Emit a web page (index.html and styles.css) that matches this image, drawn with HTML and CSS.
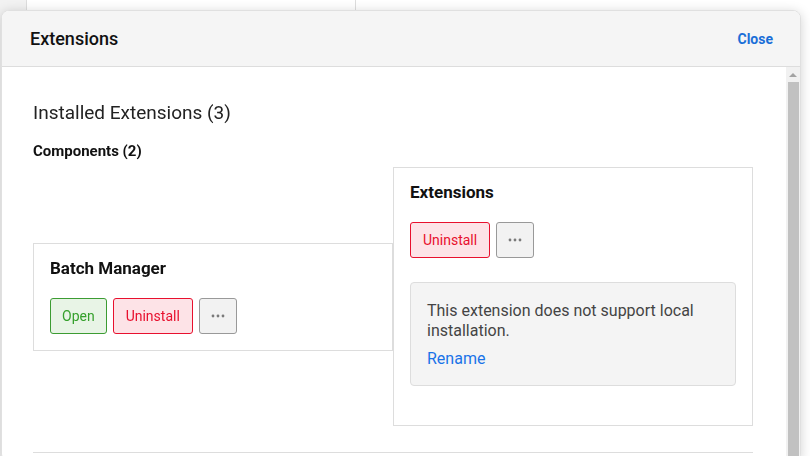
FILE: index.html
```html
<!DOCTYPE html>
<html lang="en">
<head>
<meta charset="utf-8">
<title>Extensions</title>
<link rel="stylesheet" href="styles.css">
</head>
<body>
<div class="page">
  <div class="sidebar"></div>
  <div class="panel"></div>
  <div class="main"></div>
</div>

<div class="modal">
  <div class="modal-header">
    <h1 class="modal-title">Extensions</h1>
    <a class="close-link" href="#">Close</a>
  </div>
  <div class="modal-body">
    <div class="content">
      <h2 class="section-title">Installed Extensions (3)</h2>
      <h3 class="group-title">Components (2)</h3>
      <div class="card-row">
        <div class="card">
          <div class="card-title">Batch Manager</div>
          <div class="actions">
            <button class="btn btn-open">Open</button>
            <button class="btn btn-uninstall">Uninstall</button>
            <button class="btn btn-more" aria-label="More"><svg width="14" height="4" viewBox="0 0 14 4"><circle cx="2" cy="2" r="1.4"/><circle cx="7" cy="2" r="1.4"/><circle cx="12" cy="2" r="1.4"/></svg></button>
          </div>
        </div>
        <div class="card">
          <div class="card-title">Extensions</div>
          <div class="actions">
            <button class="btn btn-uninstall">Uninstall</button>
            <button class="btn btn-more" aria-label="More"><svg width="14" height="4" viewBox="0 0 14 4"><circle cx="2" cy="2" r="1.4"/><circle cx="7" cy="2" r="1.4"/><circle cx="12" cy="2" r="1.4"/></svg></button>
          </div>
          <div class="notice">
            <p class="notice-text">This extension does not support local installation.</p>
            <a class="notice-link" href="#">Rename</a>
          </div>
        </div>
      </div>
      <div class="next-section"></div>
    </div>
    <div class="scrollbar">
      <div class="scroll-arrow"></div>
      <div class="scroll-thumb"></div>
    </div>
  </div>
</div>
</body>
</html>
```

FILE: styles.css
```css
* { box-sizing: border-box; }

html, body {
  margin: 0;
  padding: 0;
  height: 100%;
  overflow: hidden;
  background: #ffffff;
  font-family: Roboto, "Liberation Sans", Arial, sans-serif;
}

.page {
  display: flex;
  height: 100%;
}

.sidebar {
  width: 27px;
  background: #f2f2f2;
  border-right: 1px solid #dddddd;
}

.panel {
  width: 329px;
  border-right: 1px solid #dddddd;
}

.main {
  flex: 1;
}

.modal {
  position: fixed;
  left: 1px;
  top: 10px;
  width: 800px;
  height: 452px;
  background: #ffffff;
  border: 1px solid #e0e0e0;
  border-radius: 8px;
  box-shadow: 0 2px 12px rgba(0, 0, 0, 0.18);
  display: flex;
  flex-direction: column;
  overflow: hidden;
}

.modal-header {
  height: 56px;
  flex: none;
  background: #f5f5f5;
  border-bottom: 1px solid #dddddd;
  display: flex;
  align-items: center;
  justify-content: space-between;
  padding: 0 27px 0 28px;
}

.modal-title {
  margin: 0;
  font-size: 18px;
  font-weight: 500;
  color: #111111;
}

.close-link {
  font-size: 14px;
  font-weight: 700;
  color: #1a6fd8;
  text-decoration: none;
}

.modal-body {
  flex: 1;
  display: flex;
  min-height: 0;
}

.content {
  flex: 1;
  padding: 32px 32px 0 31px;
  overflow: hidden;
}

.section-title {
  margin: 0;
  font-size: 19px;
  line-height: 28px;
  font-weight: 400;
  color: #222222;
}

.group-title {
  margin: 14px 0 6px;
  font-size: 15px;
  line-height: 20px;
  font-weight: 700;
  color: #111111;
}

.card-row {
  display: flex;
  align-items: center;
}

.card {
  width: 360px;
  flex: none;
  border: 1px solid #dddddd;
  background: #ffffff;
  padding: 16px;
}

.card + .card {
  padding-bottom: 39px;
}

.card-title {
  font-size: 17px;
  line-height: 17px;
  font-weight: 700;
  color: #111111;
  margin-bottom: 21px;
}

.actions {
  display: flex;
  gap: 6px;
}

.btn {
  height: 36px;
  padding: 0 11px;
  border-radius: 3px;
  font-family: Roboto, "Liberation Sans", Arial, sans-serif;
  font-size: 14px;
  border: 1px solid;
  display: flex;
  align-items: center;
  justify-content: center;
}

.btn-open {
  background: #e8f4e6;
  border-color: #3c9c33;
  color: #35a02c;
}

.btn-uninstall {
  padding: 0 12px;
  background: #fde3e7;
  border-color: #e8102e;
  color: #e8102e;
}

.btn-more {
  width: 38px;
  background: #f2f2f2;
  border-color: #999999;
  fill: #7a7a7a;
}

.notice {
  margin-top: 24px;
  background: #f4f4f4;
  border: 1px solid #dddddd;
  border-radius: 4px;
  padding: 18px 16px 16px;
}

.notice-text {
  margin: 0;
  font-size: 16px;
  line-height: 20px;
  color: #444444;
}

.notice-link {
  display: block;
  margin-top: 8px;
  font-size: 16px;
  line-height: 20px;
  color: #1a73e8;
  text-decoration: none;
}

.next-section {
  margin-top: 26px;
  border-top: 1px solid #dddddd;
  width: 720px;
}

.scrollbar {
  width: 14px;
  flex: none;
  background: #f1f1f1;
  display: flex;
  flex-direction: column;
  align-items: center;
}

.scroll-arrow {
  margin-top: 6px;
  width: 0;
  height: 0;
  border-left: 4px solid transparent;
  border-right: 4px solid transparent;
  border-bottom: 4px solid #a3a3a3;
}

.scroll-thumb {
  margin-top: 5px;
  width: 11px;
  flex: 1;
  background: #c1c1c1;
}
```
